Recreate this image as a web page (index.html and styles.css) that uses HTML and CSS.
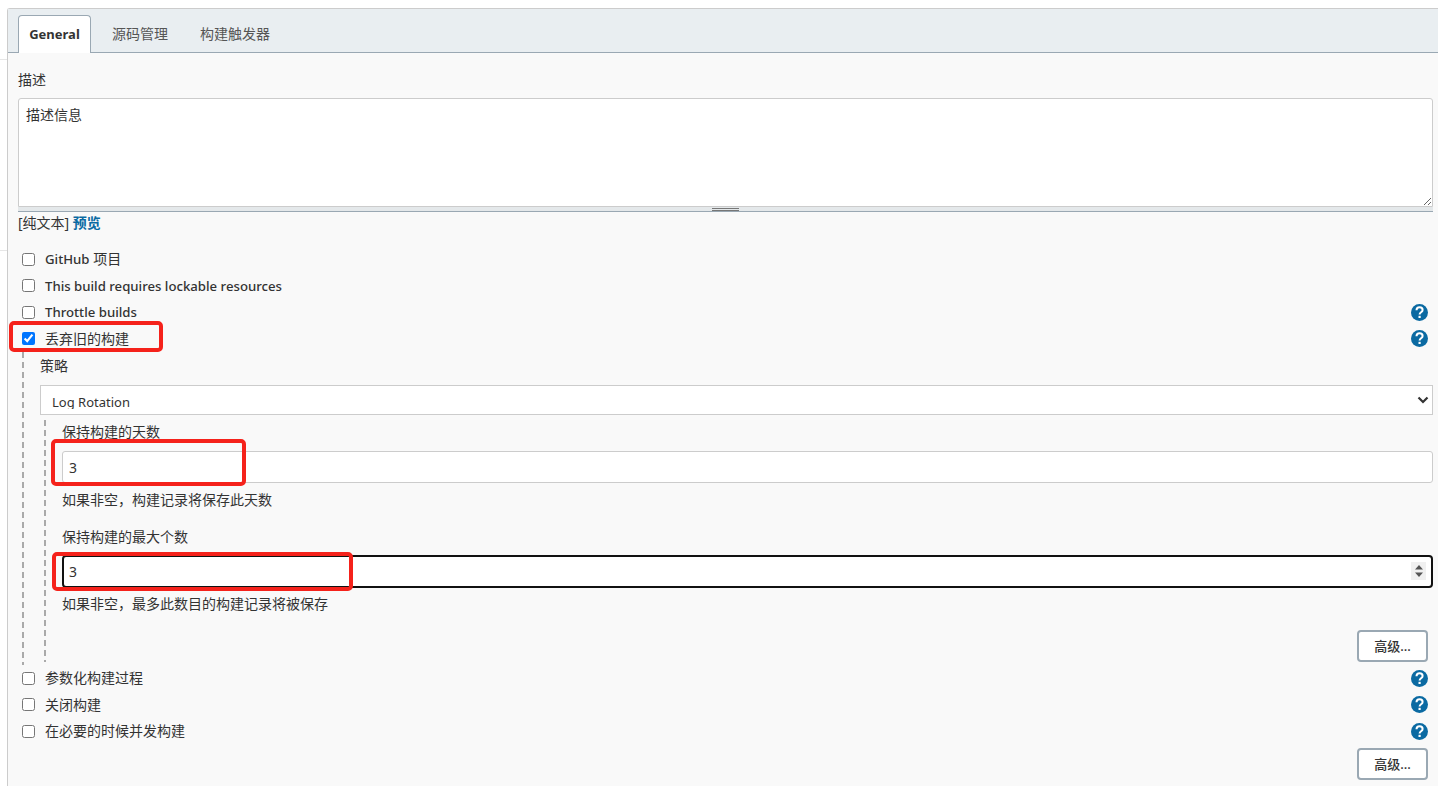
FILE: index.html
```html
<!DOCTYPE html>
<html lang="en">
<head>
  <meta charset="UTF-8">
  <title>General</title>
  <link rel="stylesheet" href="styles.css">
</head>
<body>
  <svg width="0" height="0" class="defs">
    <symbol id="help" viewBox="0 0 17 17">
      <circle cx="8.5" cy="8.5" r="8.5" fill="#0b6aa2"/>
      <path d="M5.5 6.2c0-1.8 1.3-3 3.1-3s3 1.1 3 2.7c0 2.4-3 2.4-3 4.7" fill="none" stroke="#fff" stroke-width="2"/>
      <rect x="7.5" y="11.8" width="2.2" height="2.2" fill="#fff"/>
    </symbol>
  </svg>

  <div class="edge-line edge-line-top"></div>
  <div class="edge-line edge-line-bottom"></div>

  <div class="panel">
    <div class="tabbar">
      <div class="tab active">General</div>
      <div class="tab">源码管理</div>
      <div class="tab">构建触发器</div>
    </div>

    <div class="content">
      <div class="field-label desc-label">描述</div>
      <textarea class="desc-input" spellcheck="false">描述信息</textarea>
      <div class="grip"><span class="grip-handle"></span></div>
      <div class="format-line">[纯文本] <a class="preview">预览</a></div>

      <div class="options">
        <label class="row"><input type="checkbox"><span class="row-text"><span class="latin">GitHub</span> 项目</span></label>
        <label class="row"><input type="checkbox"><span class="row-text latin">This build requires lockable resources</span></label>
        <label class="row"><input type="checkbox"><span class="row-text latin">Throttle builds</span><svg class="help"><use href="#help"/></svg></label>
        <label class="row"><input type="checkbox" checked><span class="row-text">丢弃旧的构建</span><svg class="help"><use href="#help"/></svg></label>
      </div>

      <div class="nested strategy">
        <div class="field-label">策略</div>
        <div class="select-box">
          <span class="select-text">Log Rotation</span>
          <svg class="chevron" width="12" height="8" viewBox="0 0 12 8"><path d="M1.5 1.5 6 6l4.5-4.5" fill="none" stroke="#333" stroke-width="2.2"/></svg>
        </div>

        <div class="nested rotation">
          <div class="field-label">保持构建的天数</div>
          <input class="text-input" type="text" value="3">
          <div class="help-text first-help">如果非空，构建记录将保存此天数</div>

          <div class="field-label second">保持构建的最大个数</div>
          <div class="number-field">
            <input class="text-input focused" type="text" value="3">
            <div class="spinner">
              <svg width="10" height="14" viewBox="0 0 10 14"><path d="M5 1 9 5.5H1zM1 8.5h8L5 13z" fill="#555"/></svg>
            </div>
          </div>
          <div class="help-text">如果非空，最多此数目的构建记录将被保存</div>

          <div class="button-row advanced-one"><button class="btn">高级...</button></div>
        </div>
      </div>

      <div class="options">
        <label class="row"><input type="checkbox"><span class="row-text">参数化构建过程</span><svg class="help"><use href="#help"/></svg></label>
        <label class="row"><input type="checkbox"><span class="row-text">关闭构建</span><svg class="help"><use href="#help"/></svg></label>
        <label class="row"><input type="checkbox"><span class="row-text">在必要的时候并发构建</span><svg class="help"><use href="#help"/></svg></label>
      </div>

      <div class="button-row advanced-two"><button class="btn">高级...</button></div>
    </div>
  </div>

  <!-- red annotations drawn on top of the screenshot -->
  <div class="mark mark-discard"></div>
  <div class="mark mark-days"></div>
  <div class="mark mark-count"></div>
</body>
</html>
```

FILE: styles.css
```css
html, body {
  margin: 0;
  padding: 0;
  height: 786px;
  overflow: hidden;
}
body {
  position: relative;
  background: #fff;
  color: #333;
  font-family: "Noto Sans", "Noto Sans CJK SC", sans-serif;
  font-size: 14px;
  line-height: 20px;
}
.defs {
  position: absolute;
}
.edge-line {
  position: absolute;
  left: 0;
  width: 7px;
  height: 1px;
  background: #e6e6e6;
}
.edge-line-top {
  top: 59px;
}
.edge-line-bottom {
  top: 250px;
}
.panel {
  margin: 8px 0 0 7px;
  height: 778px;
  box-sizing: border-box;
  background: #f9f9f9;
  border-left: 1px solid #ccc;
  border-top: 1px solid #ccc;
  border-top-left-radius: 3px;
}
.tabbar {
  display: flex;
  height: 44px;
  box-sizing: border-box;
  padding: 6px 0 0 10px;
  background: #e9eef1;
  border-bottom: 1px solid #9aa8b3;
}
.tab {
  height: 38px;
  box-sizing: border-box;
  padding: 9px 0 0;
  margin-right: 32px;
  color: #555;
}
.tab.active {
  width: 73px;
  margin-right: 21px;
  padding-top: 8px;
  text-align: center;
  font-weight: 700;
  font-size: 13px;
  color: #333;
  background: #fff;
  border: 1px solid #9aa8b3;
  border-bottom: none;
  border-radius: 4px 4px 0 0;
}
.content {
  padding: 0 5px 0 10px;
}
.field-label {
  height: 20px;
}
.desc-label {
  padding-top: 17px;
}
.desc-input {
  display: block;
  width: 100%;
  height: 109px;
  margin-top: 8px;
  box-sizing: border-box;
  padding: 6px 7px;
  background: #fff;
  border: 1px solid #ccc;
  border-radius: 3px 3px 0 0;
  color: #333;
  font: inherit;
  outline: none;
}
.grip {
  display: flex;
  justify-content: center;
  height: 5px;
  box-sizing: border-box;
  background: #e4e8ea;
  border-bottom: 1px solid #9aa8b3;
}
.grip-handle {
  display: block;
  width: 27px;
  height: 3px;
  margin-top: 1px;
  border-top: 1px solid #777;
  border-bottom: 1px solid #777;
  box-sizing: border-box;
}
.format-line {
  height: 26px;
  padding-top: 1px;
  box-sizing: border-box;
}
.preview {
  color: #0b6aa2;
  font-weight: 700;
}
.options {
  display: flex;
  flex-direction: column;
}
.format-line + .options {
  margin-top: 8px;
}
.row {
  display: flex;
  align-items: center;
  height: 26.5px;
  padding-right: 5px;
}
.row input {
  width: 13px;
  height: 13px;
  margin: 0 10px 0 4px;
  flex: none;
}
.row-text {
  flex: 1;
}
.latin {
  font-size: 13.2px;
  font-weight: 500;
}
.help {
  width: 17px;
  height: 17px;
  flex: none;
}
.nested {
  background: repeating-linear-gradient(#aaa 0 6px, transparent 6px 10px) left top / 2px 100% no-repeat;
}
.strategy {
  margin-left: 4px;
  padding: 4px 0 0 18px;
  height: 313px;
  box-sizing: border-box;
}
.select-box {
  display: flex;
  align-items: flex-start;
  justify-content: space-between;
  height: 30px;
  margin-top: 9px;
  box-sizing: border-box;
  background: #fff;
  border: 1px solid #ccc;
  overflow: hidden;
}
.select-text {
  display: block;
  height: 23px;
  overflow: hidden;
  padding: 7px 0 0 11px;
  box-sizing: border-box;
  font-size: 13px;
  line-height: 18px;
}
.chevron {
  margin: 10px 3px 0 0;
}
.rotation {
  margin: 5px 0 0 4px;
  padding: 2px 0 0 18px;
  height: 242px;
  box-sizing: border-box;
}
.text-input {
  display: block;
  width: 100%;
  height: 32px;
  margin-top: 9px;
  box-sizing: border-box;
  padding: 0 6px;
  background: #fff;
  border: 1px solid #ccc;
  border-radius: 3px;
  color: #333;
  font: inherit;
  outline: none;
}
.text-input.focused {
  height: 33px;
  border: 2px solid #111;
  padding: 0 5px;
  border-radius: 4px;
}
.help-text {
  margin-top: 6px;
  height: 20px;
}
.first-help {
  margin-top: 7px;
}
.second {
  margin-top: 17px;
}
.number-field {
  position: relative;
  margin-top: -1px;
}
.spinner {
  position: absolute;
  right: 7px;
  top: 7px;
  display: flex;
  align-items: center;
  justify-content: center;
  width: 15px;
  height: 18px;
  background: #f0f0f0;
}
.button-row {
  display: flex;
  justify-content: flex-end;
  padding-right: 5px;
}
.advanced-one {
  margin-top: 16px;
}
.advanced-two {
  margin-top: 3px;
}
.btn {
  width: 71px;
  height: 32px;
  box-sizing: border-box;
  padding: 0;
  background: #fff;
  border: 2px solid #9aa8b3;
  border-radius: 4px;
  color: #333;
  font: inherit;
  font-size: 13px;
  font-weight: 500;
}
.mark {
  position: absolute;
  box-sizing: border-box;
  border: 4px solid #f5221b;
  border-radius: 5px;
}
.mark-discard {
  left: 9px;
  top: 321px;
  width: 154px;
  height: 31px;
}
.mark-days {
  left: 51px;
  top: 439px;
  width: 195px;
  height: 47px;
}
.mark-count {
  left: 52px;
  top: 552px;
  width: 301px;
  height: 39px;
}
```
